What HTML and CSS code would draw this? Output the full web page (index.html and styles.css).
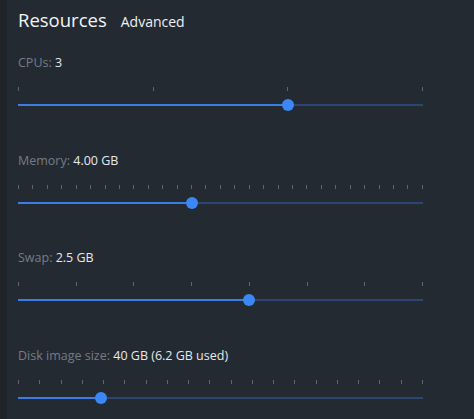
FILE: index.html
```html
<!DOCTYPE html>
<html>
<head>
<meta charset="utf-8">
<link rel="stylesheet" href="styles.css">
</head>
<body>
<div class="app">
  <aside class="rail"></aside>
  <main class="panel">
    <header class="head">
      <h1 class="title">Resources</h1>
      <span class="tab">Advanced</span>
    </header>

    <section class="setting">
      <div class="label">CPUs: <span class="value">3</span></div>
      <div class="ticks">
        <i></i><i></i><i></i><i></i>
      </div>
      <div class="slider" style="--v: 66.667%">
        <div class="fill"></div>
        <div class="thumb"></div>
      </div>
    </section>

    <section class="setting">
      <div class="label">Memory: <span class="value">4.00 GB</span></div>
      <div class="ticks">
        <i></i><i></i><i></i><i></i><i></i><i></i><i></i><i></i><i></i><i></i>
        <i></i><i></i><i></i><i></i><i></i><i></i><i></i><i></i><i></i><i></i>
        <i></i><i></i><i></i><i></i><i></i><i></i><i></i><i></i><i></i>
      </div>
      <div class="slider" style="--v: 42.857%">
        <div class="fill"></div>
        <div class="thumb"></div>
      </div>
    </section>

    <section class="setting">
      <div class="label">Swap: <span class="value">2.5 GB</span></div>
      <div class="ticks">
        <i></i><i></i><i></i><i></i><i></i><i></i><i></i><i></i>
      </div>
      <div class="slider" style="--v: 57.143%">
        <div class="fill"></div>
        <div class="thumb"></div>
      </div>
    </section>

    <section class="setting">
      <div class="label">Disk image size: <span class="value">40 GB (6.2 GB used)</span></div>
      <div class="ticks">
        <i></i><i></i><i></i><i></i><i></i><i></i><i></i><i></i><i></i><i></i>
        <i></i><i></i><i></i><i></i><i></i><i></i><i></i><i></i><i></i><i></i>
      </div>
      <div class="slider" style="--v: 20.5%">
        <div class="fill"></div>
        <div class="thumb"></div>
      </div>
    </section>
  </main>
</div>
</body>
</html>
```
FILE: styles.css
```css
html, body {
  margin: 0;
  padding: 0;
  background: #242a32;
  height: 100%;
  overflow: hidden;
}

body {
  font-family: "Open Sans", "Noto Sans", sans-serif;
  color: #e8ebee;
}

.app {
  display: flex;
  height: 419px;
}

.rail {
  width: 7px;
  flex: none;
  background: #1f242b;
}

.panel {
  flex: 1;
  padding: 8px 0 0 11px;
}

.head {
  display: flex;
  align-items: baseline;
  gap: 14px;
  height: 24px;
}

.title {
  margin: 0;
  font-size: 18.5px;
  line-height: 24px;
  font-weight: 400;
  color: #f2f4f6;
}

.tab {
  font-size: 14px;
  line-height: 24px;
  color: #eef0f2;
}

.setting {
  width: 405px;
  margin-top: 22px;
}

.setting + .setting {
  margin-top: 39.5px;
}

.label {
  font-size: 12.5px;
  line-height: 18px;
  color: #747c86;
}

.value {
  color: #e6e9ec;
}

.ticks {
  margin-top: 15px;
  height: 4px;
  display: flex;
  justify-content: space-between;
}

.ticks i {
  width: 1px;
  height: 4px;
  background: #5e666f;
}

.slider {
  position: relative;
  margin-top: 7px;
  height: 14px;
}

.slider::before {
  content: "";
  position: absolute;
  left: 0;
  right: 0;
  top: 6px;
  height: 2px;
  background: #2b4670;
}

.fill {
  position: absolute;
  left: 0;
  top: 6px;
  height: 2px;
  width: var(--v);
  background: #3a7de4;
}

.thumb {
  position: absolute;
  top: 1px;
  left: var(--v);
  width: 12px;
  height: 12px;
  margin-left: -6px;
  border-radius: 50%;
  background: #3b87f6;
}
```
